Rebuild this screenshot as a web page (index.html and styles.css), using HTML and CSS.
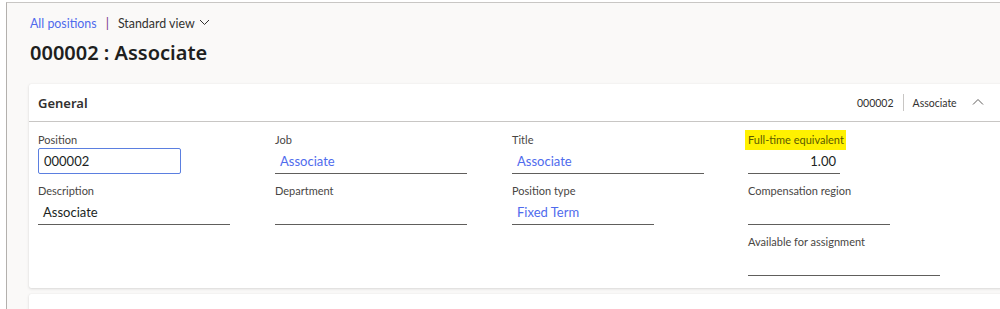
FILE: index.html
```html
<!DOCTYPE html>
<html>
<head>
<meta charset="utf-8">
<link rel="stylesheet" href="styles.css">
</head>
<body>
<div class="frame">
  <div class="main">
    <div class="crumbs">
      <a class="link">All positions</a>
      <span class="sep">|</span>
      <span class="view">Standard view</span>
      <svg class="chev" width="11" height="7" viewBox="0 0 11 7"><path d="M1 1 L5.5 5.5 L10 1" fill="none" stroke="#323130" stroke-width="1"/></svg>
    </div>
    <h1 class="title">000002 : Associate</h1>

    <section class="card">
      <header class="card-head">
        <span class="card-title">General</span>
        <div class="summary">
          <span>000002</span>
          <span class="vsep"></span>
          <span>Associate</span>
          <svg class="up" width="12" height="7" viewBox="0 0 12 7"><path d="M1 6.5 L6 1.5 L11 6.5" fill="none" stroke="#605e5c" stroke-width="1"/></svg>
        </div>
      </header>
      <div class="grid">
        <div class="col">
          <div class="field">
            <label class="lbl">Position</label>
            <div class="input">000002</div>
          </div>
          <div class="field">
            <label class="lbl">Description</label>
            <div class="ctl w192 plain">Associate</div>
          </div>
        </div>
        <div class="col">
          <div class="field">
            <label class="lbl">Job</label>
            <div class="ctl w192 blue">Associate</div>
          </div>
          <div class="field">
            <label class="lbl">Department</label>
            <div class="ctl w192"></div>
          </div>
        </div>
        <div class="col">
          <div class="field">
            <label class="lbl">Title</label>
            <div class="ctl w192 blue">Associate</div>
          </div>
          <div class="field">
            <label class="lbl">Position type</label>
            <div class="ctl w142 blue">Fixed Term</div>
          </div>
        </div>
        <div class="col">
          <div class="field">
            <label class="lbl"><span class="hl">Full-time equivalent</span></label>
            <div class="ctl w92 num plain">1.00</div>
          </div>
          <div class="field">
            <label class="lbl">Compensation region</label>
            <div class="ctl w142"></div>
          </div>
          <div class="field">
            <label class="lbl">Available for assignment</label>
            <div class="ctl w192"></div>
          </div>
        </div>
      </div>
    </section>

    <section class="card next">
      <header class="card-head2">
        <span class="card-title">Position hierarchy</span>
      </header>
    </section>
  </div>
</div>
</body>
</html>
```

FILE: styles.css
```css
html, body {
  margin: 0;
  padding: 0;
  background: #ffffff;
  height: 309px;
  overflow: hidden;
}
body {
  font-family: Lato, "Noto Sans", sans-serif;
  color: #323130;
}
.frame {
  padding-top: 2px;
  padding-left: 6px;
  height: 307px;
}
.main {
  height: 100%;
  background: #faf9f8;
  border-top: 1px solid #c8c6c4;
  border-left: 1px solid #b3b0ad;
  padding-left: 22px;
  overflow: hidden;
  box-sizing: border-box;
}
.crumbs {
  display: flex;
  align-items: center;
  height: 20px;
  margin-top: 10px;
  font-size: 12.4px;
  padding-left: 1px;
}
.link {
  color: #4f6bed;
}
.sep {
  color: #7a3b8a;
  margin: 0 9px 0 9px;
  font-size: 13px;
}
.view {
  color: #323130;
}
.chev {
  margin-left: 4px;
  margin-top: -1px;
}
.title {
  margin: 6px 0 0 0;
  padding-left: 1px;
  font-family: "Noto Sans", sans-serif;
  font-size: 20px;
  font-weight: 600;
  line-height: 28px;
  color: #201f1e;
}
.card {
  margin-top: 17px;
  margin-right: -40px;
  background: #ffffff;
  border-radius: 2px;
  box-shadow: 0 1px 3px rgba(0,0,0,0.13), 0 0 1px rgba(0,0,0,0.1);
  height: 204px;
}
.card-head {
  height: 37px;
  border-bottom: 1px solid #c8c6c4;
  display: flex;
  align-items: center;
  justify-content: space-between;
  padding: 0 0 0 9px;
}
.card-title {
  font-family: "Noto Sans", sans-serif;
  font-size: 13px;
  font-weight: 600;
  color: #323130;
}
.summary {
  display: flex;
  align-items: center;
  font-size: 10.5px;
  color: #323130;
  width: 183px;
  box-sizing: border-box;
}
.vsep {
  width: 1px;
  height: 17px;
  background: #c8c6c4;
  margin: 0 9px 0 9px;
}
.up {
  margin-left: 15px;
  margin-top: -2px;
}
.grid {
  display: grid;
  grid-template-columns: 237px 237px 236px 237px;
  padding: 10px 0 0 9px;
}
.field {
  height: 51px;
}
.lbl {
  display: block;
  font-size: 11px;
  line-height: 15px;
  color: #484644;
  height: 16px;
}
.hl {
  background: #fff100;
  display: inline-block;
  padding: 2px 2px 3px 3px;
  margin: -2px 0 0 -3px;
  line-height: 15px;
  color: #5c5a00;
}
.input {
  width: 143px;
  height: 26px;
  box-sizing: border-box;
  border: 1px solid #5b7fe0;
  border-radius: 2px;
  font-size: 13px;
  line-height: 24px;
  padding-left: 5px;
  color: #201f1e;
}
.ctl {
  height: 26px;
  box-sizing: border-box;
  border-bottom: 1px solid #605e5c;
  font-size: 13px;
  line-height: 26px;
  padding-left: 5px;
}
.w192 { width: 192px; }
.w142 { width: 142px; }
.w92 { width: 92px; }
.blue { color: #4f6bed; }
.plain { color: #201f1e; }
.num {
  text-align: right;
  padding-right: 4px;
}
.next {
  margin-top: 6px;
  height: 40px;
}
.card-head2 {
  padding: 14px 0 0 9px;
}
```
